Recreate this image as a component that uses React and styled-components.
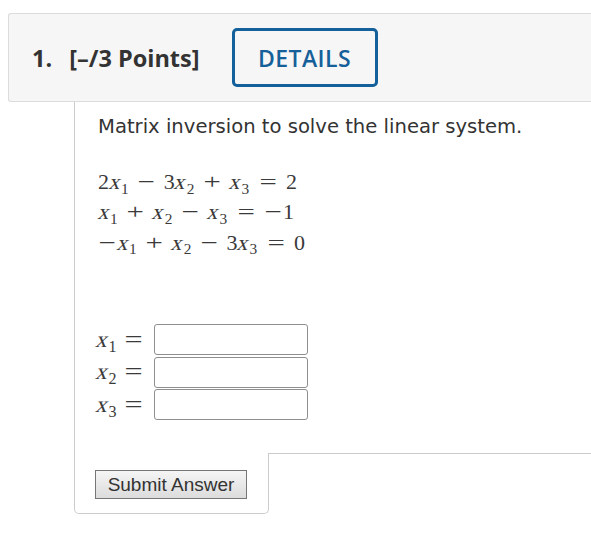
import React from "react";
import styled, { createGlobalStyle } from "styled-components";

const Global = createGlobalStyle`
  html, body { margin: 0; padding: 0; background: #ffffff; }
  body { font-family: "DejaVu Sans", sans-serif; }
`;

const Page = styled.div`
  padding: 13px 0 0 8px;
`;

const Header = styled.div`
  display: flex;
  align-items: center;
  height: 87px;
  background: #f6f6f6;
  border: 1px solid #dcdcdc;
  border-right: none;
  border-radius: 3px 0 0 3px;
  padding-left: 23px;
  font-family: "Open Sans", sans-serif;
  color: #333333;
`;

const Num = styled.span`
  font-weight: 700;
  font-size: 23.5px;
  margin-right: 17px;
`;

const Points = styled.span`
  font-weight: 700;
  font-size: 23.5px;
`;

const DetailsButton = styled.button`
  margin-left: 32px;
  width: 146px;
  height: 59px;
  box-sizing: border-box;
  border: 3px solid #14609a;
  border-radius: 5px;
  background: transparent;
  color: #16609a;
  font-family: "Open Sans", sans-serif;
  font-weight: 600;
  font-size: 23px;
  letter-spacing: 0.4px;
  padding: 0;
  cursor: pointer;
`;

const Panel = styled.div`
  margin-left: 66px;
`;

const Content = styled.div`
  border-left: 1px solid #cccccc;
  padding: 13px 0 33px 23px;
`;

const Prompt = styled.p`
  margin: 0;
  font-family: "DejaVu Sans", sans-serif;
  font-size: 19.6px;
  line-height: 24px;
  color: #333333;
`;

const MathBlock = styled.div`
  margin-top: 28px;
  font-family: "Liberation Serif", serif;
  font-size: 22px;
  color: #3a3a3a;
`;

const EqLine = styled.div`
  line-height: 30.4px;
  height: 30.4px;
  white-space: nowrap;
`;

const Digit = styled.span``;

const Var = styled.span`
  display: inline-block;
  font-family: "Liberation Serif", serif;
  font-style: normal;
  transform: skewX(-15deg);
  margin: 0 0.5px;
`;

const Sub = styled.span`
  font-size: 0.7em;
  vertical-align: -0.3em;
  line-height: 0;
  margin-right: 1px;
`;

const Op = styled.span`
  display: inline-block;
  width: ${(p) => p.$w || 34}px;
  text-align: center;
`;

const OpGlyph = styled.span`
  display: inline-block;
  transform: scaleX(1.4);
`;

const UnaryMinus = styled.span`
  display: inline-block;
  width: 19px;
  text-align: center;
`;

const Answers = styled.div`
  margin-top: 66px;
  display: flex;
  flex-direction: column;
  gap: 1.5px;
`;

const AnswerRow = styled.div`
  display: flex;
  align-items: center;
`;

const Label = styled.span`
  width: 58px;
  margin-left: -2px;
  font-family: "Liberation Serif", serif;
  font-size: 23px;
  color: #3a3a3a;
  white-space: nowrap;
`;

const AnswerInput = styled.input`
  box-sizing: border-box;
  width: 154px;
  height: 31px;
  border: 1px solid #8f8f8f;
  border-radius: 3px;
  background: #ffffff;
  margin: 0;
  padding: 0 4px;
`;

const Footer = styled.div`
  display: flex;
`;

const SubmitCell = styled.div`
  box-sizing: border-box;
  width: 195px;
  border: 1px solid #cccccc;
  border-top: none;
  border-radius: 0 0 5px 5px;
  padding: 17px 0 14px 20px;
`;

const Rest = styled.div`
  flex: 1;
  border-top: 1px solid #cccccc;
`;

const SubmitButton = styled.button`
  box-sizing: border-box;
  width: 152px;
  height: 29px;
  padding: 0;
  border: 1px solid #767676;
  background: linear-gradient(#f5f5f5, #dcdcdc);
  font-family: "Liberation Sans", Arial, sans-serif;
  font-size: 19px;
  color: #333333;
  cursor: pointer;
`;

function X({ i }) {
  return (
    <>
      <Var>x</Var>
      <Sub>{i}</Sub>
    </>
  );
}

function Bin({ c, w }) {
  return (
    <Op $w={w}>
      <OpGlyph>{c}</OpGlyph>
    </Op>
  );
}

function Neg() {
  return (
    <UnaryMinus>
      <OpGlyph>−</OpGlyph>
    </UnaryMinus>
  );
}

export default function App() {
  return (
    <>
      <Global />
      <Page>
        <Header>
          <Num>1.</Num>
          <Points>[–/3 Points]</Points>
          <DetailsButton>DETAILS</DetailsButton>
        </Header>
        <Panel>
          <Content>
            <Prompt>Matrix inversion to solve the linear system.</Prompt>
            <MathBlock>
              <EqLine>
                <Digit>2</Digit>
                <X i="1" />
                <Bin c="−" />
                <Digit>3</Digit>
                <X i="2" />
                <Bin c="+" />
                <X i="3" />
                <Bin c="=" w={36} />
                <Digit>2</Digit>
              </EqLine>
              <EqLine>
                <X i="1" />
                <Bin c="+" />
                <X i="2" />
                <Bin c="−" />
                <X i="3" />
                <Bin c="=" w={36} />
                <Neg />
                <Digit>1</Digit>
              </EqLine>
              <EqLine>
                <Neg />
                <X i="1" />
                <Bin c="+" />
                <X i="2" />
                <Bin c="−" />
                <Digit>3</Digit>
                <X i="3" />
                <Bin c="=" w={36} />
                <Digit>0</Digit>
              </EqLine>
            </MathBlock>
            <Answers>
              {["1", "2", "3"].map((i) => (
                <AnswerRow key={i}>
                  <Label>
                    <X i={i} />
                    <Bin c="=" w={31} />
                  </Label>
                  <AnswerInput type="text" aria-label={`x${i}`} />
                </AnswerRow>
              ))}
            </Answers>
          </Content>
          <Footer>
            <SubmitCell>
              <SubmitButton>Submit Answer</SubmitButton>
            </SubmitCell>
            <Rest />
          </Footer>
        </Panel>
      </Page>
    </>
  );
}
